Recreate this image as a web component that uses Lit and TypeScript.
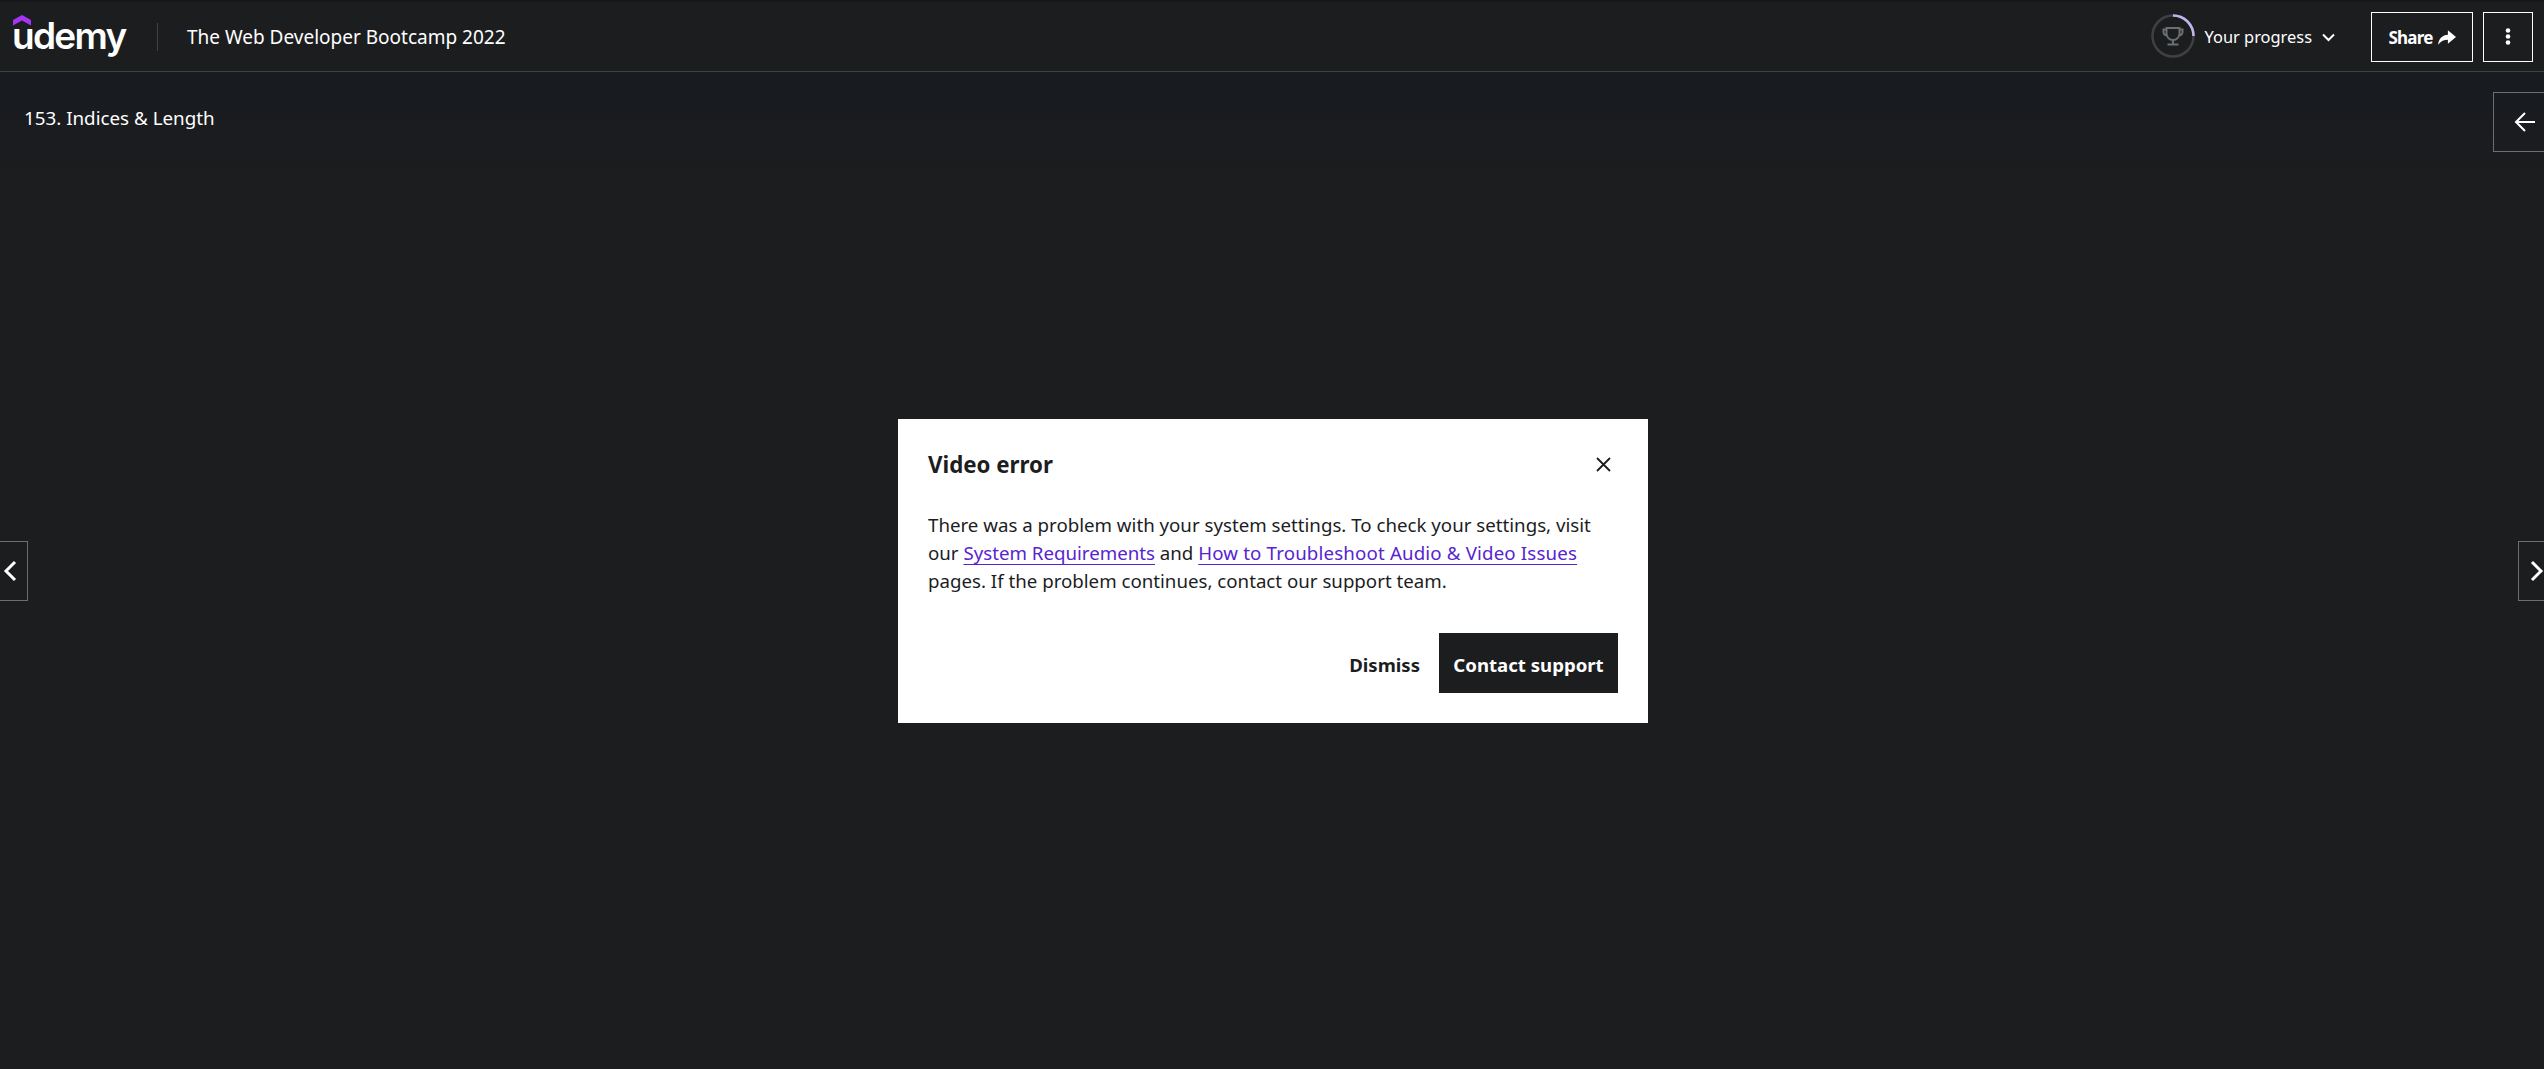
import { LitElement, html, css } from "lit";
import { customElement } from "lit/decorators.js";

@customElement("app-root")
export class AppRoot extends LitElement {
  static styles = css`
    :host { display: block; height: 1069px; overflow: hidden; background: #1c1d1f; color: #fff; font-family: "Noto Sans", "Open Sans", sans-serif; position: relative; }
    * { box-sizing: border-box; }
    .page { display: flex; flex-direction: column; height: 100%; }
    .top { height: 72px; flex: none; display: flex; align-items: center; border-bottom: 1px solid #3e4143; border-top: 2px solid #17161b; padding: 1px 11px 0 13px; }
    .logo { position: relative; width: 114px; height: 50px; flex: none; }
    .logo svg { position: absolute; left: 0; top: 0; }
    .logo span { position: absolute; left: -1px; top: 0; font: 600 37px/48px Inter, sans-serif; letter-spacing: -1.7px; color: #fff; }
    .div { width: 1px; height: 28px; background: #3e4143; margin: 0 30px; flex: none; }
    .course { font-size: 19px; line-height: 28px; margin-left: -1px; }
    .spacer { flex: 1; }
    .progress { display: flex; align-items: center; margin-right: 36px; }
    .ring { width: 44px; height: 44px; flex: none; margin: 0 10px 2px 0; }
    .ptext { font-size: 16.400px; line-height: 28px; }
    .pchev { margin-left: 10px; display: block; }
    .btn { border: 1px solid #fff; height: 50px; display: flex; align-items: center; justify-content: center; color: #fff; font-weight: 700; font-size: 17px; }
    .share { width: 102px; gap: 5px; margin-right: 10px; }
    .share span { letter-spacing: -0.8px; }
    .more { width: 50px; }
    .more svg { margin-bottom: 1px; }
    .main { flex: 1; position: relative; padding: 32px 24px; background: linear-gradient(#181b20, #1c1d1f 110px); }
    .lesson { font-size: 18.800px; line-height: 28px; }
    .back { position: absolute; right: 0; top: 20px; width: 51px; height: 60px; border: 1px solid #6a6f73; border-right: none; display: flex; align-items: center; justify-content: flex-start; padding-left: 20px; }
    .nav { position: absolute; top: 469px; height: 60px; border: 1px solid #6a6f73; display: flex; align-items: center; background: #1c1d1f; }
    .prev { left: -1px; width: 29px; padding-left: 3px; }
    .next { right: -1px; width: 27px; padding-left: 11px; }
    .overlay { position: absolute; left: 0; right: 0; top: 0; bottom: 0; display: flex; align-items: flex-start; justify-content: center; padding: 419px 0 0 2px; }
    .modal { width: 750px; height: 304px; background: #fff; color: #1c1d1f; padding: 30px; display: flex; flex-direction: column; }
    .head { display: flex; justify-content: space-between; align-items: center; height: 32px; }
    .head h2 { margin: 0; font-size: 22.300px; font-weight: 700; line-height: 32px; }
    .close { display: block; margin: 0 7px 2px 0; }
    .body { margin: 30px 0 0; font-size: 18.700px; line-height: 28px; }
    .line { display: block; }
    .body a { color: #5624d0; text-decoration: underline; text-underline-offset: 4px; }
    .body a.wide { letter-spacing: 0.16px; }
    .actions { margin-top: auto; display: flex; justify-content: flex-end; align-items: center; gap: 19px; }
    .dismiss { font-size: 18.600px; font-weight: 700; padding-top: 3px; }
    .contact { width: 179px; height: 60px; padding-top: 3px; background: #1c1d1f; color: #fff; font-size: 18.600px; font-weight: 700; display: flex; align-items: center; justify-content: center; }
  `;

  render() {
    return html`
      <div class="page">
        <header class="top">
          <div class="logo">
            <svg width="20" height="16" viewBox="0 0 20 16"><polygon points="0,8 9,3 18,8 18,13.500 9,8.500 0,13.500" fill="#a435f0"/></svg>
            <span>udemy</span>
          </div>
          <div class="div"></div>
          <div class="course">The Web Developer Bootcamp 2022</div>
          <div class="spacer"></div>
          <div class="progress">
            <svg class="ring" viewBox="0 0 44 44">
              <circle cx="22" cy="22" r="20.500" fill="none" stroke="#3e4143" stroke-width="2.500"/>
              <path d="M22 1.500A20.500 20.500 0 0 1 42.500 22" fill="none" stroke="#c0b3ee" stroke-width="2.500"/>
              <path d="M15.500 14h13v5.500a6.500 6.500 0 0 1-13 0zM15.500 15.500h-3v2.500a3.500 3.500 0 0 0 3.500 3.500M28.500 15.500h3v2.500a3.500 3.500 0 0 1-3.500 3.500M22 26v4M16.500 30.500h11" fill="none" stroke="#6a6f73" stroke-width="2"/>
            </svg>
            <span class="ptext">Your progress</span>
            <svg class="pchev" width="13" height="9" viewBox="0 0 13 9"><path d="M1 1.500l5.500 5.500 5.500-5.500" fill="none" stroke="#fff" stroke-width="2"/></svg>
          </div>
          <div class="btn share"><span>Share</span>
            <svg width="18" height="15" viewBox="0 0 20 16"><path d="M11 0l9 7.500-9 7.500v-4.500C7 10.500 3 12 0 16c1-7 5-10.500 11-11z" fill="#fff"/></svg>
          </div>
          <div class="btn more">
            <svg width="6" height="17" viewBox="0 0 6 17"><circle cx="3" cy="2.500" r="2.300" fill="#fff"/><circle cx="3" cy="8.500" r="2.300" fill="#fff"/><circle cx="3" cy="14.500" r="2.300" fill="#fff"/></svg>
          </div>
        </header>
        <main class="main">
          <div class="lesson">153. Indices &amp; Length</div>
          <div class="back">
            <svg width="21" height="20" viewBox="0 0 21 20"><path d="M21 10H2M11 1L2 10l9 9" fill="none" stroke="#fff" stroke-width="2"/></svg>
          </div>
          <div class="nav prev">
            <svg width="14" height="22" viewBox="0 0 14 22"><path d="M12 2l-9 9 9 9" fill="none" stroke="#fff" stroke-width="3"/></svg>
          </div>
          <div class="nav next">
            <svg width="14" height="22" viewBox="0 0 14 22"><path d="M2 2l9 9-9 9" fill="none" stroke="#fff" stroke-width="3"/></svg>
          </div>
        </main>
      </div>
      <div class="overlay">
        <section class="modal">
          <div class="head">
            <h2>Video error</h2>
            <svg class="close" width="15" height="15" viewBox="0 0 15 15"><path d="M1 1l13 13M14 1L1 14" fill="none" stroke="#1c1d1f" stroke-width="1.800"/></svg>
          </div>
          <div class="body">
            <span class="line">There was a problem with your system settings. To check your settings, visit</span>
            <div class="line"><span>our </span><a>System Requirements</a><span> and </span><a class="wide">How to Troubleshoot Audio &amp; Video Issues</a></div>
            <span class="line">pages. If the problem continues, contact our support team.</span>
          </div>
          <div class="actions">
            <span class="dismiss">Dismiss</span>
            <div class="contact">Contact support</div>
          </div>
        </section>
      </div>
    `;
  }
}
